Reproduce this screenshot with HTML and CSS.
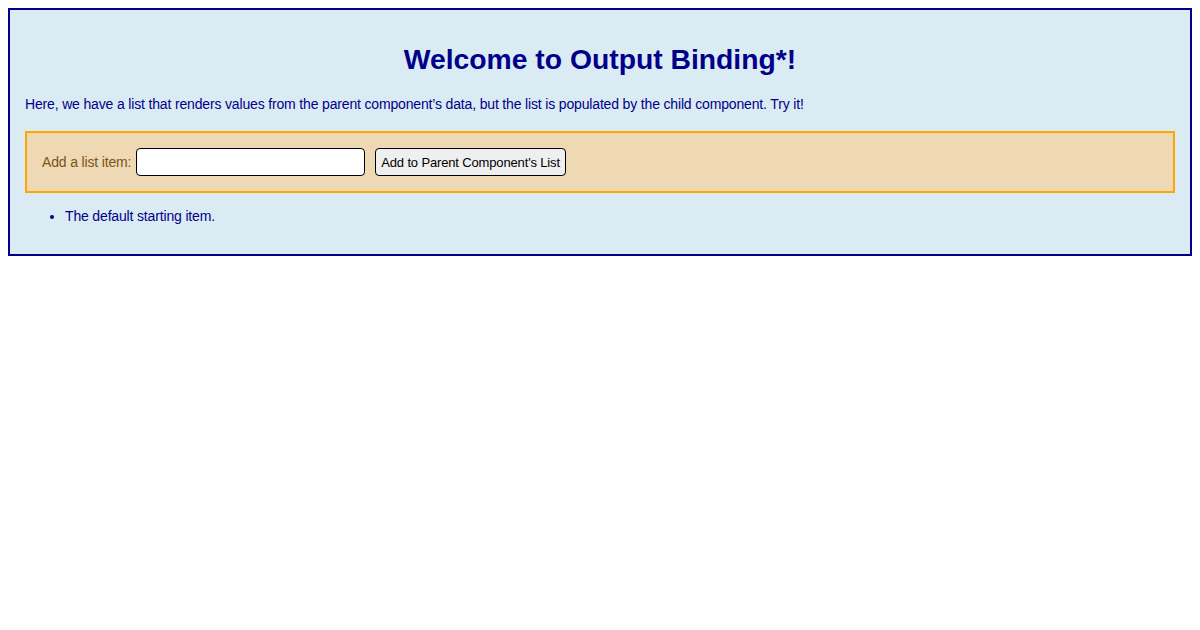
FILE: index.html
```html
<!DOCTYPE html>
<html>
<head>
<meta charset="utf-8">
<link rel="stylesheet" href="styles.css">
</head>
<body>
<div class="parent">
  <h1 class="title">Welcome to Output Binding*!</h1>
  <p class="intro">Here, we have a list that renders values from the parent component’s data, but the list is populated by the child component. Try it!</p>
  <div class="child">
    <label class="label" for="item">Add a list item:</label>
    <input class="field" id="item" type="text">
    <button class="btn" type="button">Add to Parent Component's List</button>
  </div>
  <ul class="list">
    <li>The default starting item.</li>
  </ul>
</div>
</body>
</html>
```

FILE: styles.css
```css
body {
  margin: 8px;
  font-family: "Liberation Sans", Arial, sans-serif;
  font-size: 14px;
  letter-spacing: -0.16px;
  line-height: 16px;
}
.parent {
  border: 2px solid #00008b;
  background: #dbebf3;
  color: #00008b;
  padding: 15px;
}
.title {
  font-size: 28.3px;
  letter-spacing: 0;
  line-height: 32px;
  text-align: center;
  margin: 18px 0 21px;
}
.intro {
  margin: 21px 0 19px;
}
.child {
  border: 2px solid #ffa500;
  background: #eed9b4;
  padding: 15px;
  display: flex;
  align-items: center;
}
.label {
  color: #7a5418;
  margin-right: 5px;
}
.field {
  width: 229px;
  height: 28px;
  box-sizing: border-box;
  border: 1px solid #000;
  border-radius: 4px;
  background: #fff;
  margin: 0 10px 0 0;
  padding: 2px 4px;
  font: inherit;
}
.btn {
  height: 28px;
  box-sizing: border-box;
  border: 1px solid #000;
  border-radius: 4px;
  background: #efefef;
  color: #000;
  font-family: "Liberation Sans", Arial, sans-serif;
  font-size: 13px;
  letter-spacing: -0.15px;
  padding: 0 5px;
}
.list {
  margin: 14.5px 0 15.5px;
  padding-left: 40px;
}
```
